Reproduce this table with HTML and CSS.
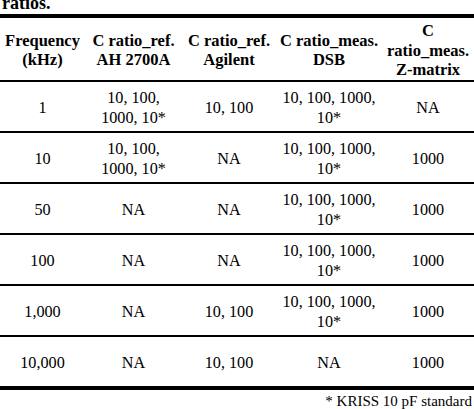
FILE: index.html
```html
<!DOCTYPE html>
<html lang="en">
<head>
<meta charset="utf-8">
<title>C ratios</title>
<link rel="stylesheet" href="styles.css">
</head>
<body>
<div class="caption">ratios.</div>
<table class="data">
  <colgroup>
    <col class="c1"><col class="c2"><col class="c3"><col class="c4"><col class="c5">
  </colgroup>
  <thead>
    <tr>
      <th>Frequency<br>(kHz)</th>
      <th>C ratio_ref.<br>AH 2700A</th>
      <th>C ratio_ref.<br>Agilent</th>
      <th>C ratio_meas.<br>DSB</th>
      <th>C<br>ratio_meas.<br>Z-matrix</th>
    </tr>
  </thead>
  <tbody>
    <tr>
      <td>1</td>
      <td>10, 100,<br>1000, 10*</td>
      <td>10, 100</td>
      <td>10, 100, 1000,<br>10*</td>
      <td>NA</td>
    </tr>
    <tr>
      <td>10</td>
      <td>10, 100,<br>1000, 10*</td>
      <td>NA</td>
      <td>10, 100, 1000,<br>10*</td>
      <td>1000</td>
    </tr>
    <tr>
      <td>50</td>
      <td>NA</td>
      <td>NA</td>
      <td>10, 100, 1000,<br>10*</td>
      <td>1000</td>
    </tr>
    <tr>
      <td>100</td>
      <td>NA</td>
      <td>NA</td>
      <td>10, 100, 1000,<br>10*</td>
      <td>1000</td>
    </tr>
    <tr>
      <td>1,000</td>
      <td>NA</td>
      <td>10, 100</td>
      <td>10, 100, 1000,<br>10*</td>
      <td>1000</td>
    </tr>
    <tr class="last">
      <td>10,000</td>
      <td>NA</td>
      <td>10, 100</td>
      <td>NA</td>
      <td>1000</td>
    </tr>
  </tbody>
</table>
<div class="footnote">* KRISS 10 pF standard</div>
</body>
</html>
```
FILE: styles.css
```css
html, body {
  margin: 0;
  padding: 0;
  background: #ffffff;
}

body {
  width: 474px;
  font-family: "Liberation Serif", "Times New Roman", serif;
  color: #000000;
}

.caption {
  font-size: 18px;
  line-height: 18px;
  font-weight: bold;
  padding-left: 2px;
  margin-top: -6px;
  margin-bottom: 2px;
  height: 18px;
}

.data {
  width: 474px;
  table-layout: fixed;
  border-collapse: separate;
  border-spacing: 0;
  border-top: 4px solid #000000;
}

.c1 { width: 85px; }
.c2 { width: 97px; }
.c3 { width: 94px; }
.c4 { width: 106px; }
.c5 { width: 92px; }

.data th,
.data td {
  padding: 3px 0 0 0;
  text-align: center;
  vertical-align: middle;
  border-bottom: 2px solid #000000;
}

.data thead tr {
  height: 61px;
}

.data th {
  font-size: 16.5px;
  line-height: 19.5px;
  font-weight: bold;
}

.data tbody tr {
  height: 51px;
}

.data td {
  font-size: 16.2px;
  line-height: 20px;
  font-weight: normal;
}

.data tbody tr.last {
  height: 53px;
}

.data tr.last td {
  border-bottom: 4px solid #000000;
}

.footnote {
  margin-top: 2px;
  font-size: 15px;
  line-height: 18px;
  text-align: right;
  padding-right: 2px;
}
```
